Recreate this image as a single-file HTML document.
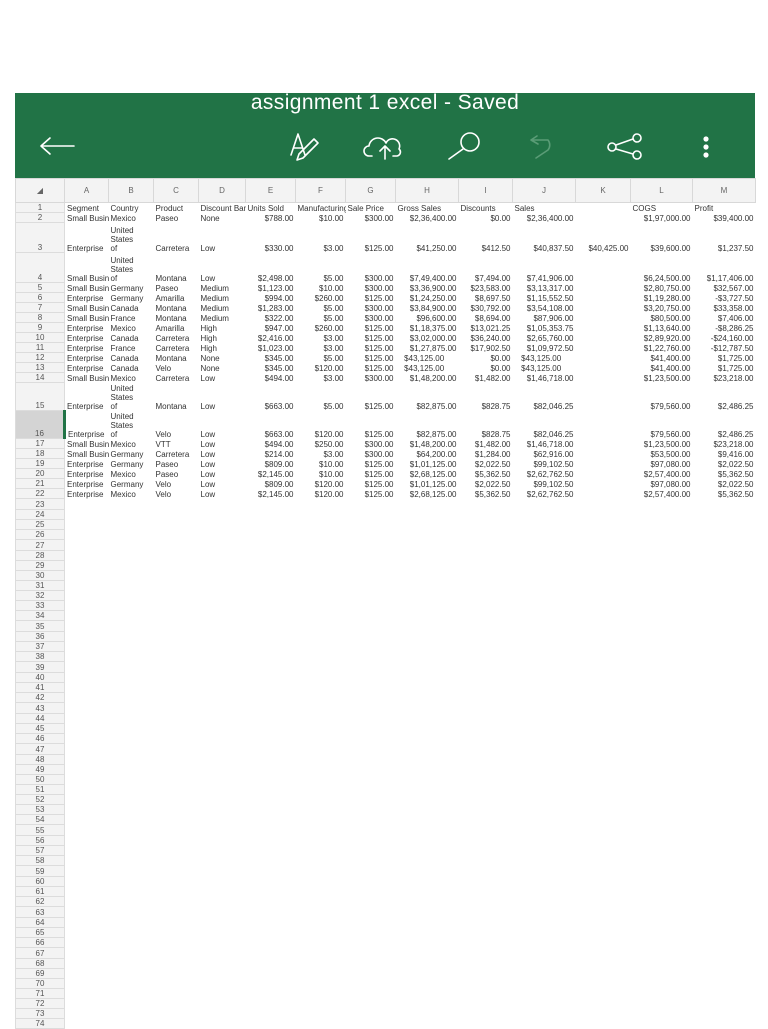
<!DOCTYPE html>
<html><head><meta charset="utf-8"><style>
*{margin:0;padding:0;box-sizing:border-box}
body{width:768px;height:1024px;background:#fff;position:relative;overflow:hidden;font-family:"Liberation Sans",sans-serif}
.bar{position:absolute;left:15px;top:93px;width:740px;height:85px;background:#217346}
.title{position:absolute;left:15px;width:740px;top:91px;text-align:center;color:#fff;font-size:21px;letter-spacing:0.4px}
svg{position:absolute}
table{position:absolute;left:15px;top:178px;border-collapse:collapse;table-layout:fixed;font-size:8px;color:#333;width:740px}
td{white-space:nowrap;overflow:hidden;vertical-align:bottom;padding:0 2px;line-height:9px;height:9.6px}
tr.h td{height:24px;background:#f3f3f3;border:1px solid #d8d8d8;text-align:center;vertical-align:middle;color:#666}
td.n{background:#f3f3f3;border:1px solid #dcdcdc;text-align:center;color:#555}
.r{text-align:right}
tr.e td{height:9.85px}
tr.e:nth-child(4n) td{height:10.8px}
</style></head><body>
<div class="bar"></div>
<div class="title">assignment 1 excel - Saved</div>
<svg width="768" height="200" style="left:0;top:0" fill="none" stroke="#fff" stroke-width="1.6" stroke-linecap="round" stroke-linejoin="round">
<path d="M41 146H74M41 146l9-8M41 146l9 8"/>
<path d="M291 155l7-21 7 21M294 148h8M297 160l2-6 15-15 4 4-15 15z"/>
<path d="M372 156h-3a5 5 0 0 1 0-10 9 9 0 0 1 17-3 7 7 0 0 1 13 6 4 4 0 0 1-2 7h-4M385 159v-12M380 151l5-5 5 5"/>
<circle cx="470" cy="142" r="9"/><path d="M463 149l-14 10"/>
<path d="M531 140l6-4M531 140l7 4M531 140h17a8 8 0 0 1 0 10l-12 8" stroke="#5a9c76"/>
<circle cx="612" cy="147" r="4"/><circle cx="637" cy="138" r="4"/><circle cx="637" cy="155" r="4"/><path d="M616 145l17-6M616 149l17 5"/>
<g fill="#fff" stroke="none"><circle cx="706" cy="139" r="2.6"/><circle cx="706" cy="147" r="2.6"/><circle cx="706" cy="155" r="2.6"/></g>
</svg>
<table>
<colgroup><col style="width:49px"><col style="width:44px"><col style="width:45px"><col style="width:45px"><col style="width:47px"><col style="width:50px"><col style="width:50px"><col style="width:50px"><col style="width:63px"><col style="width:54px"><col style="width:63px"><col style="width:55px"><col style="width:62px"><col style="width:63px"></colgroup>
<tr class="h"><td>◢</td><td>A</td><td>B</td><td>C</td><td>D</td><td>E</td><td>F</td><td>G</td><td>H</td><td>I</td><td>J</td><td>K</td><td>L</td><td>M</td></tr>
<tr><td class="n">1</td><td>Segment</td><td>Country</td><td>Product</td><td>Discount Band</td><td>Units Sold</td><td>Manufacturing</td><td>Sale Price</td><td>Gross Sales</td><td>Discounts</td><td>Sales</td><td></td><td>COGS</td><td>Profit</td></tr>
<tr><td class="n">2</td><td>Small Business</td><td>Mexico</td><td>Paseo</td><td>None</td><td class="r">$788.00</td><td class="r">$10.00</td><td class="r">$300.00</td><td class="r">$2,36,400.00</td><td class="r">$0.00</td><td class="r">$2,36,400.00</td><td></td><td class="r">$1,97,000.00</td><td class="r">$39,400.00</td></tr>
<tr><td class="n" style="height:30px">3</td><td>Enterprise</td><td style="white-space:normal">United<br>States<br>of</td><td>Carretera</td><td>Low</td><td class="r">$330.00</td><td class="r">$3.00</td><td class="r">$125.00</td><td class="r">$41,250.00</td><td class="r">$412.50</td><td class="r">$40,837.50</td><td class="r">$40,425.00</td><td class="r">$39,600.00</td><td class="r">$1,237.50</td></tr>
<tr><td class="n" style="height:30px">4</td><td>Small Business</td><td style="white-space:normal">United<br>States<br>of</td><td>Montana</td><td>Low</td><td class="r">$2,498.00</td><td class="r">$5.00</td><td class="r">$300.00</td><td class="r">$7,49,400.00</td><td class="r">$7,494.00</td><td class="r">$7,41,906.00</td><td></td><td class="r">$6,24,500.00</td><td class="r">$1,17,406.00</td></tr>
<tr><td class="n">5</td><td>Small Business</td><td>Germany</td><td>Paseo</td><td>Medium</td><td class="r">$1,123.00</td><td class="r">$10.00</td><td class="r">$300.00</td><td class="r">$3,36,900.00</td><td class="r">$23,583.00</td><td class="r">$3,13,317.00</td><td></td><td class="r">$2,80,750.00</td><td class="r">$32,567.00</td></tr>
<tr><td class="n">6</td><td>Enterprise</td><td>Germany</td><td>Amarilla</td><td>Medium</td><td class="r">$994.00</td><td class="r">$260.00</td><td class="r">$125.00</td><td class="r">$1,24,250.00</td><td class="r">$8,697.50</td><td class="r">$1,15,552.50</td><td></td><td class="r">$1,19,280.00</td><td class="r">-$3,727.50</td></tr>
<tr><td class="n">7</td><td>Small Business</td><td>Canada</td><td>Montana</td><td>Medium</td><td class="r">$1,283.00</td><td class="r">$5.00</td><td class="r">$300.00</td><td class="r">$3,84,900.00</td><td class="r">$30,792.00</td><td class="r">$3,54,108.00</td><td></td><td class="r">$3,20,750.00</td><td class="r">$33,358.00</td></tr>
<tr><td class="n">8</td><td>Small Business</td><td>France</td><td>Montana</td><td>Medium</td><td class="r">$322.00</td><td class="r">$5.00</td><td class="r">$300.00</td><td class="r">$96,600.00</td><td class="r">$8,694.00</td><td class="r">$87,906.00</td><td></td><td class="r">$80,500.00</td><td class="r">$7,406.00</td></tr>
<tr><td class="n">9</td><td>Enterprise</td><td>Mexico</td><td>Amarilla</td><td>High</td><td class="r">$947.00</td><td class="r">$260.00</td><td class="r">$125.00</td><td class="r">$1,18,375.00</td><td class="r">$13,021.25</td><td class="r">$1,05,353.75</td><td></td><td class="r">$1,13,640.00</td><td class="r">-$8,286.25</td></tr>
<tr><td class="n">10</td><td>Enterprise</td><td>Canada</td><td>Carretera</td><td>High</td><td class="r">$2,416.00</td><td class="r">$3.00</td><td class="r">$125.00</td><td class="r">$3,02,000.00</td><td class="r">$36,240.00</td><td class="r">$2,65,760.00</td><td></td><td class="r">$2,89,920.00</td><td class="r">-$24,160.00</td></tr>
<tr><td class="n">11</td><td>Enterprise</td><td>France</td><td>Carretera</td><td>High</td><td class="r">$1,023.00</td><td class="r">$3.00</td><td class="r">$125.00</td><td class="r">$1,27,875.00</td><td class="r">$17,902.50</td><td class="r">$1,09,972.50</td><td></td><td class="r">$1,22,760.00</td><td class="r">-$12,787.50</td></tr>
<tr><td class="n">12</td><td>Enterprise</td><td>Canada</td><td>Montana</td><td>None</td><td class="r">$345.00</td><td class="r">$5.00</td><td class="r">$125.00</td><td>&nbsp;&nbsp;&nbsp;$43,125.00</td><td class="r">$0.00</td><td>&nbsp;&nbsp;&nbsp;$43,125.00</td><td></td><td class="r">$41,400.00</td><td class="r">$1,725.00</td></tr>
<tr><td class="n">13</td><td>Enterprise</td><td>Canada</td><td>Velo</td><td>None</td><td class="r">$345.00</td><td class="r">$120.00</td><td class="r">$125.00</td><td>&nbsp;&nbsp;&nbsp;$43,125.00</td><td class="r">$0.00</td><td>&nbsp;&nbsp;&nbsp;$43,125.00</td><td></td><td class="r">$41,400.00</td><td class="r">$1,725.00</td></tr>
<tr><td class="n">14</td><td>Small Business</td><td>Mexico</td><td>Carretera</td><td>Low</td><td class="r">$494.00</td><td class="r">$3.00</td><td class="r">$300.00</td><td class="r">$1,48,200.00</td><td class="r">$1,482.00</td><td class="r">$1,46,718.00</td><td></td><td class="r">$1,23,500.00</td><td class="r">$23,218.00</td></tr>
<tr><td class="n" style="height:28px">15</td><td>Enterprise</td><td style="white-space:normal">United<br>States<br>of</td><td>Montana</td><td>Low</td><td class="r">$663.00</td><td class="r">$5.00</td><td class="r">$125.00</td><td class="r">$82,875.00</td><td class="r">$828.75</td><td class="r">$82,046.25</td><td></td><td class="r">$79,560.00</td><td class="r">$2,486.25</td></tr>
<tr><td class="n" style="height:28px;background:#d4d4d4;border-right:3px solid #217346">16</td><td>Enterprise</td><td style="white-space:normal">United<br>States<br>of</td><td>Velo</td><td>Low</td><td class="r">$663.00</td><td class="r">$120.00</td><td class="r">$125.00</td><td class="r">$82,875.00</td><td class="r">$828.75</td><td class="r">$82,046.25</td><td></td><td class="r">$79,560.00</td><td class="r">$2,486.25</td></tr>
<tr><td class="n">17</td><td>Small Business</td><td>Mexico</td><td>VTT</td><td>Low</td><td class="r">$494.00</td><td class="r">$250.00</td><td class="r">$300.00</td><td class="r">$1,48,200.00</td><td class="r">$1,482.00</td><td class="r">$1,46,718.00</td><td></td><td class="r">$1,23,500.00</td><td class="r">$23,218.00</td></tr>
<tr><td class="n">18</td><td>Small Business</td><td>Germany</td><td>Carretera</td><td>Low</td><td class="r">$214.00</td><td class="r">$3.00</td><td class="r">$300.00</td><td class="r">$64,200.00</td><td class="r">$1,284.00</td><td class="r">$62,916.00</td><td></td><td class="r">$53,500.00</td><td class="r">$9,416.00</td></tr>
<tr><td class="n">19</td><td>Enterprise</td><td>Germany</td><td>Paseo</td><td>Low</td><td class="r">$809.00</td><td class="r">$10.00</td><td class="r">$125.00</td><td class="r">$1,01,125.00</td><td class="r">$2,022.50</td><td class="r">$99,102.50</td><td></td><td class="r">$97,080.00</td><td class="r">$2,022.50</td></tr>
<tr><td class="n">20</td><td>Enterprise</td><td>Mexico</td><td>Paseo</td><td>Low</td><td class="r">$2,145.00</td><td class="r">$10.00</td><td class="r">$125.00</td><td class="r">$2,68,125.00</td><td class="r">$5,362.50</td><td class="r">$2,62,762.50</td><td></td><td class="r">$2,57,400.00</td><td class="r">$5,362.50</td></tr>
<tr><td class="n">21</td><td>Enterprise</td><td>Germany</td><td>Velo</td><td>Low</td><td class="r">$809.00</td><td class="r">$120.00</td><td class="r">$125.00</td><td class="r">$1,01,125.00</td><td class="r">$2,022.50</td><td class="r">$99,102.50</td><td></td><td class="r">$97,080.00</td><td class="r">$2,022.50</td></tr>
<tr><td class="n">22</td><td>Enterprise</td><td>Mexico</td><td>Velo</td><td>Low</td><td class="r">$2,145.00</td><td class="r">$120.00</td><td class="r">$125.00</td><td class="r">$2,68,125.00</td><td class="r">$5,362.50</td><td class="r">$2,62,762.50</td><td></td><td class="r">$2,57,400.00</td><td class="r">$5,362.50</td></tr>
<tr class="e"><td class="n">23</td><td colspan="13"></td></tr>
<tr class="e"><td class="n">24</td><td colspan="13"></td></tr>
<tr class="e"><td class="n">25</td><td colspan="13"></td></tr>
<tr class="e"><td class="n">26</td><td colspan="13"></td></tr>
<tr class="e"><td class="n">27</td><td colspan="13"></td></tr>
<tr class="e"><td class="n">28</td><td colspan="13"></td></tr>
<tr class="e"><td class="n">29</td><td colspan="13"></td></tr>
<tr class="e"><td class="n">30</td><td colspan="13"></td></tr>
<tr class="e"><td class="n">31</td><td colspan="13"></td></tr>
<tr class="e"><td class="n">32</td><td colspan="13"></td></tr>
<tr class="e"><td class="n">33</td><td colspan="13"></td></tr>
<tr class="e"><td class="n">34</td><td colspan="13"></td></tr>
<tr class="e"><td class="n">35</td><td colspan="13"></td></tr>
<tr class="e"><td class="n">36</td><td colspan="13"></td></tr>
<tr class="e"><td class="n">37</td><td colspan="13"></td></tr>
<tr class="e"><td class="n">38</td><td colspan="13"></td></tr>
<tr class="e"><td class="n">39</td><td colspan="13"></td></tr>
<tr class="e"><td class="n">40</td><td colspan="13"></td></tr>
<tr class="e"><td class="n">41</td><td colspan="13"></td></tr>
<tr class="e"><td class="n">42</td><td colspan="13"></td></tr>
<tr class="e"><td class="n">43</td><td colspan="13"></td></tr>
<tr class="e"><td class="n">44</td><td colspan="13"></td></tr>
<tr class="e"><td class="n">45</td><td colspan="13"></td></tr>
<tr class="e"><td class="n">46</td><td colspan="13"></td></tr>
<tr class="e"><td class="n">47</td><td colspan="13"></td></tr>
<tr class="e"><td class="n">48</td><td colspan="13"></td></tr>
<tr class="e"><td class="n">49</td><td colspan="13"></td></tr>
<tr class="e"><td class="n">50</td><td colspan="13"></td></tr>
<tr class="e"><td class="n">51</td><td colspan="13"></td></tr>
<tr class="e"><td class="n">52</td><td colspan="13"></td></tr>
<tr class="e"><td class="n">53</td><td colspan="13"></td></tr>
<tr class="e"><td class="n">54</td><td colspan="13"></td></tr>
<tr class="e"><td class="n">55</td><td colspan="13"></td></tr>
<tr class="e"><td class="n">56</td><td colspan="13"></td></tr>
<tr class="e"><td class="n">57</td><td colspan="13"></td></tr>
<tr class="e"><td class="n">58</td><td colspan="13"></td></tr>
<tr class="e"><td class="n">59</td><td colspan="13"></td></tr>
<tr class="e"><td class="n">60</td><td colspan="13"></td></tr>
<tr class="e"><td class="n">61</td><td colspan="13"></td></tr>
<tr class="e"><td class="n">62</td><td colspan="13"></td></tr>
<tr class="e"><td class="n">63</td><td colspan="13"></td></tr>
<tr class="e"><td class="n">64</td><td colspan="13"></td></tr>
<tr class="e"><td class="n">65</td><td colspan="13"></td></tr>
<tr class="e"><td class="n">66</td><td colspan="13"></td></tr>
<tr class="e"><td class="n">67</td><td colspan="13"></td></tr>
<tr class="e"><td class="n">68</td><td colspan="13"></td></tr>
<tr class="e"><td class="n">69</td><td colspan="13"></td></tr>
<tr class="e"><td class="n">70</td><td colspan="13"></td></tr>
<tr class="e"><td class="n">71</td><td colspan="13"></td></tr>
<tr class="e"><td class="n">72</td><td colspan="13"></td></tr>
<tr class="e"><td class="n">73</td><td colspan="13"></td></tr>
<tr class="e"><td class="n">74</td><td colspan="13"></td></tr>
</table>
</body></html>
